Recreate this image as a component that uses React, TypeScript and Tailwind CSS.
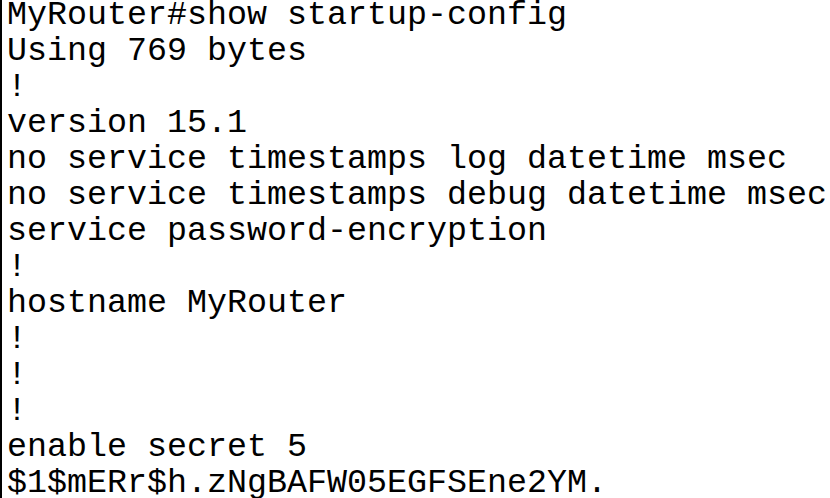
const lines = [
  'MyRouter#show startup-config',
  'Using 769 bytes',
  '!',
  'version 15.1',
  'no service timestamps log datetime msec',
  'no service timestamps debug datetime msec',
  'service password-encryption',
  '!',
  'hostname MyRouter',
  '!',
  '!',
  '!',
  'enable secret 5',
  '$1$mERr$h.zNgBAFW05EGFSEne2YM.',
];

export default function App() {
  return (
    <div className="w-[830px] h-[498px] bg-white overflow-hidden border-l-2 border-black">
      <pre className="pl-[5px] -mt-[3px] font-['Courier_New','Nimbus_Mono_PS','FreeMono','Liberation_Mono',monospace] text-[33.33px] leading-[36px] text-black">
        {lines.join('\n')}
      </pre>
    </div>
  );
}
